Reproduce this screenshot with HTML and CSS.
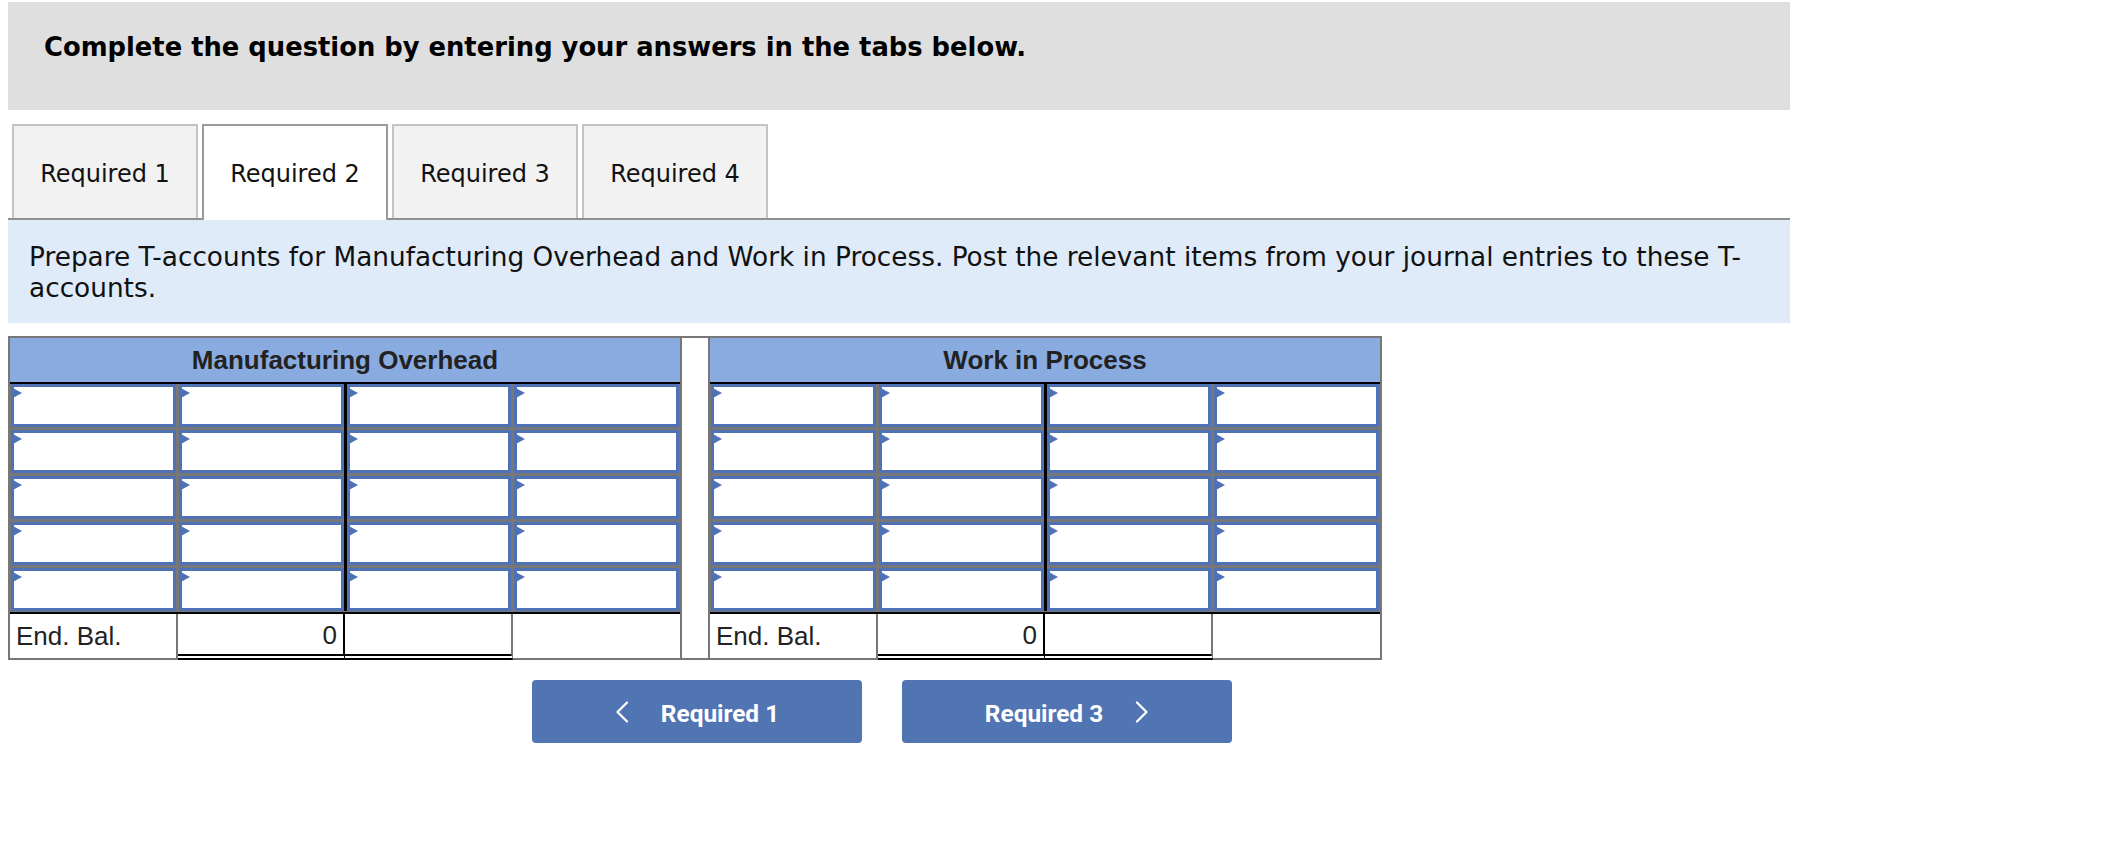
FILE: index.html
```html
<!DOCTYPE html>
<html lang="en">
<head>
<meta charset="utf-8">
<title>T-accounts</title>
<link rel="stylesheet" href="styles.css">
</head>
<body>
<div class="page">
  <div class="banner">
    <h1 class="banner-title">Complete the question by entering your answers in the tabs below.</h1>
  </div>

  <div class="tabs">
    <div class="tab">Required 1</div>
    <div class="tab active">Required 2</div>
    <div class="tab">Required 3</div>
    <div class="tab">Required 4</div>
  </div>

  <div class="instructions">Prepare T-accounts for Manufacturing Overhead and Work in Process. Post the relevant items from your journal entries to these T-accounts.</div>

  <div class="taccounts">
    <div class="acct">
      <div class="acct-head">Manufacturing Overhead</div>
      <div class="acct-body">
        <div class="side">
          <div class="cell"></div><div class="cell"></div>
          <div class="cell"></div><div class="cell"></div>
          <div class="cell"></div><div class="cell"></div>
          <div class="cell"></div><div class="cell"></div>
          <div class="cell"></div><div class="cell"></div>
        </div>
        <div class="side">
          <div class="cell"></div><div class="cell"></div>
          <div class="cell"></div><div class="cell"></div>
          <div class="cell"></div><div class="cell"></div>
          <div class="cell"></div><div class="cell"></div>
          <div class="cell"></div><div class="cell"></div>
        </div>
      </div>
      <div class="acct-end">
        <div class="end-cell label">End. Bal.</div>
        <div class="end-cell amount dbl">0</div>
        <div class="end-cell dbl"></div>
        <div class="end-cell"></div>
      </div>
    </div>

    <div class="spacer"></div>

    <div class="acct">
      <div class="acct-head">Work in Process</div>
      <div class="acct-body">
        <div class="side">
          <div class="cell"></div><div class="cell"></div>
          <div class="cell"></div><div class="cell"></div>
          <div class="cell"></div><div class="cell"></div>
          <div class="cell"></div><div class="cell"></div>
          <div class="cell"></div><div class="cell"></div>
        </div>
        <div class="side">
          <div class="cell"></div><div class="cell"></div>
          <div class="cell"></div><div class="cell"></div>
          <div class="cell"></div><div class="cell"></div>
          <div class="cell"></div><div class="cell"></div>
          <div class="cell"></div><div class="cell"></div>
        </div>
      </div>
      <div class="acct-end">
        <div class="end-cell label">End. Bal.</div>
        <div class="end-cell amount dbl">0</div>
        <div class="end-cell dbl"></div>
        <div class="end-cell"></div>
      </div>
    </div>
  </div>

  <div class="nav">
    <button class="nav-btn" type="button">
      <svg class="chev" width="14" height="22" viewBox="0 0 14 22"><polyline points="12,1.5 2.5,11 12,20.5" fill="none" stroke="#fff" stroke-width="2.2" stroke-linecap="round" stroke-linejoin="round"/></svg>
      <span class="nav-text">Required 1</span>
    </button>
    <button class="nav-btn" type="button">
      <span class="nav-text">Required 3</span>
      <svg class="chev" width="14" height="22" viewBox="0 0 14 22"><polyline points="2,1.5 11.5,11 2,20.5" fill="none" stroke="#fff" stroke-width="2.2" stroke-linecap="round" stroke-linejoin="round"/></svg>
    </button>
  </div>
</div>
</body>
</html>
```

FILE: styles.css
```css
html, body {
  margin: 0;
  padding: 0;
  background: #ffffff;
}

.page {
  padding: 2px 0 0 8px;
  width: 1782px;
  font-family: "DejaVu Sans", Verdana, sans-serif;
  color: #000;
}

.banner {
  box-sizing: border-box;
  height: 108px;
  background: #dfdfdf;
  padding: 30px 0 0 36px;
}

.banner-title {
  margin: 0;
  font-size: 25.8px;
  font-weight: bold;
  line-height: normal;
}

.tabs {
  display: flex;
  align-items: flex-start;
  gap: 4px;
  padding-left: 4px;
  margin-top: 14px;
  height: 94px;
  border-bottom: 2px solid #8f8f8f;
}

.tab {
  box-sizing: border-box;
  width: 186px;
  height: 94px;
  border: 2px solid #c3c3c3;
  border-bottom: none;
  background: #f2f2f2;
  display: flex;
  align-items: center;
  justify-content: center;
  padding-top: 4px;
  font-size: 24px;
  color: #111;
}

.tab.active {
  background: #ffffff;
  border-color: #9b9b9b;
  height: 96px;
  margin-bottom: -2px;
  padding-bottom: 2px;
}

.instructions {
  box-sizing: border-box;
  background: #dfebf8;
  padding: 22px 10px 19px 21px;
  font-size: 26.35px;
  line-height: 31px;
  color: #111;
}

.taccounts {
  display: flex;
  margin-top: 13px;
  width: 1374px;
  box-sizing: border-box;
  border: 2px solid #777777;
  border-bottom: none;
  font-family: "Liberation Sans", Arial, sans-serif;
}

.acct {
  width: 670px;
  display: flex;
  flex-direction: column;
}

.acct-head {
  height: 44px;
  background: #8aabe0;
  display: flex;
  align-items: center;
  justify-content: center;
  font-weight: bold;
  font-size: 26px;
  color: #222;
}

.acct-body {
  display: flex;
  background: #777777;
  border-top: 2px solid #000;
  border-bottom: 2px solid #000;
  padding-bottom: 1px;
}

.side {
  flex: 1 1 0;
  display: grid;
  grid-template-columns: 1fr 1fr;
  grid-auto-rows: 43px;
  gap: 3px;
}

.side:first-child {
  padding-left: 1px;
  border-right: 3px solid #000;
}

.side:last-child {
  padding-right: 1px;
}

.cell {
  position: relative;
  background: #ffffff;
  border: 3px solid #4e72b5;
}

.cell::before {
  content: "";
  position: absolute;
  left: -3px;
  top: 0;
  width: 0;
  height: 0;
  border-left: 11px solid #4e72b5;
  border-top: 6px solid transparent;
  border-bottom: 6px solid transparent;
}

.acct-end {
  display: grid;
  grid-template-columns: repeat(4, 1fr);
  height: 46px;
  background: #ffffff;
}

.end-cell {
  box-sizing: border-box;
  border-bottom: 2px solid #777777;
  display: flex;
  align-items: center;
  font-size: 26px;
  color: #222;
}

.end-cell:nth-child(1) { border-right: 2px solid #777777; }
.end-cell:nth-child(2) { border-right: 2px solid #000000; }
.end-cell:nth-child(3) { border-right: 2px solid #777777; }

.end-cell.dbl {
  border-bottom: 6px double #000000;
}

.label {
  padding-left: 6px;
}

.amount {
  justify-content: flex-end;
  padding-right: 6px;
  padding-top: 2px;
}

.spacer {
  width: 26px;
  background: #ffffff;
  border-left: 2px solid #777777;
  border-right: 2px solid #777777;
  border-bottom: 2px solid #777777;
}

.nav {
  display: flex;
  gap: 40px;
  margin-top: 20px;
  padding-left: 524px;
}

.nav-btn {
  width: 330px;
  height: 63px;
  border: none;
  border-radius: 4px;
  background: #5174b3;
  color: #ffffff;
  display: flex;
  align-items: center;
  justify-content: center;
  gap: 32px;
  font-family: Roboto, "Liberation Sans", sans-serif;
  font-weight: bold;
  font-size: 24.4px;
  padding: 0;
}

.nav-text {
  padding-top: 4px;
}

.chev {
  display: block;
}
```
